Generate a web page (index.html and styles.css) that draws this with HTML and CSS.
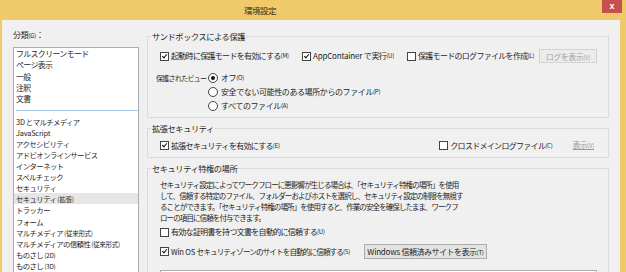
FILE: index.html
```html
<!DOCTYPE html>
<html lang="ja">

<head>
    <meta charset="UTF-8">
    <title>環境設定</title>
    <link rel="stylesheet" href="styles.css">
</head>

<body>
    <div class="window">
        <div class="titlebar">
            <span class="title">環境設定</span>
            <span class="close">x</span>
        </div>

        <div class="client">
            <!-- 左側：分類リスト -->
            <div class="sidebar">
                <div class="side-label">分類<span class="key">(G)</span>：</div>
                <div class="listbox">
                    <div class="item big">フルスクリーンモード</div>
                    <div class="item big">ページ表示</div>
                    <div class="item big">一般</div>
                    <div class="item big">注釈</div>
                    <div class="item big">文書</div>
                    <div class="sep"></div>
                    <div class="item"><span class="lat">3D</span> とマルチメディア</div>
                    <div class="item"><span class="lat">JavaScript</span></div>
                    <div class="item">アクセシビリティ</div>
                    <div class="item">アドビオンラインサービス</div>
                    <div class="item">インターネット</div>
                    <div class="item">スペルチェック</div>
                    <div class="item">セキュリティ</div>
                    <div class="item selected">セキュリティ <span class="small">(拡張)</span></div>
                    <div class="item">トラッカー</div>
                    <div class="item">フォーム</div>
                    <div class="item">マルチメディア <span class="small">(従来形式)</span></div>
                    <div class="item">マルチメディアの信頼性 <span class="small">(従来形式)</span></div>
                    <div class="item">ものさし <span class="small">(2D)</span></div>
                    <div class="item">ものさし <span class="small">(3D)</span></div>
                </div>
            </div>

            <!-- 右側：設定グループ -->
            <div class="main">
                <fieldset class="group">
                    <legend>サンドボックスによる保護</legend>
                    <div class="group-body g1">
                        <div class="row1">
                            <label class="check"><span class="box on"></span>起動時に保護モードを有効にする<span class="key">(M)</span></label>
                            <label class="check"><span class="box on"></span><span class="lat">AppContainer で</span>実行<span class="key">(U)</span></label>
                            <label class="check"><span class="box"></span>保護モードのログファイルを作成<span class="key">(L)</span></label>
                            <span class="btn disabled">ログを表示<span class="key">(V)</span></span>
                        </div>
                        <div class="view-row">
                            <span class="view-label">保護されたビュー</span>
                            <div class="radios">
                                <label class="radio"><span class="dot on"></span>オフ<span class="key">(O)</span></label>
                                <label class="radio"><span class="dot"></span>安全でない可能性のある場所からのファイル<span class="key">(P)</span></label>
                                <label class="radio"><span class="dot"></span>すべてのファイル<span class="key">(A)</span></label>
                            </div>
                        </div>
                    </div>
                </fieldset>

                <fieldset class="group">
                    <legend>拡張セキュリティ</legend>
                    <div class="group-body g2">
                        <label class="check"><span class="box on"></span>拡張セキュリティを有効にする<span class="key">(E)</span></label>
                        <label class="check cross"><span class="box"></span>クロスドメインログファイル<span class="key">(C)</span></label>
                        <span class="link-disabled">表示<span class="key">(V)</span></span>
                    </div>
                </fieldset>

                <fieldset class="group">
                    <legend>セキュリティ特権の場所</legend>
                    <div class="group-body g3">
                        <p class="desc">セキュリティ設定によってワークフローに悪影響が生じる場合は、「セキュリティ特権の場所」を使用<br>して、信頼する特定のファイル、フォルダーおよびホストを選択し、セキュリティ設定の制限を無視す<br>ることができます。「セキュリティ特権の場所」を使用すると、作業の安全を確保したまま、ワークフ<br>ローの項目に信頼を付与できます。</p>
                        <label class="check"><span class="box"></span>有効な証明書を持つ文書を自動的に信頼する<span class="key">(U)</span></label>
                        <div class="row-win">
                            <label class="check"><span class="box on"></span><span class="lat">Win OS </span>セキュリティゾーンのサイトを自動的に信頼する<span class="key">(S)</span></label>
                            <span class="btn"><span class="lat">Windows </span>信頼済みサイトを表示<span class="key">(T)</span></span>
                        </div>
                        <div class="sites"></div>
                    </div>
                </fieldset>
            </div>
        </div>
    </div>
</body>

</html>
```

FILE: styles.css
```css
body {
    margin: 0;
    background-color: #f0c96a;
    font-family: "Noto Sans CJK JP", sans-serif;
    font-size: 8px;
    letter-spacing: -0.7px;
    color: #1e1e1e;
}

.window {
    width: 626px;
    height: 272px;
    overflow: hidden;
    display: flex;
    flex-direction: column;
}

.titlebar {
    height: 20px;
    display: flex;
    flex-shrink: 0;
}

.title {
    margin-left: 244px;
    line-height: 20px;
    font-size: 8.5px;
    letter-spacing: -0.5px;
    color: #3a3320;
}

.close {
    margin-left: auto;
    margin-right: 4px;
    width: 20px;
    height: 13px;
    line-height: 12px;
    text-align: center;
    background-color: #c7504c;
    color: #fff;
    font-family: "Liberation Sans", sans-serif;
    font-size: 9px;
    font-weight: bold;
    letter-spacing: 0;
}

.client {
    flex: 1;
    margin: 0 6px 0 2px;
    background-color: #f0f0f0;
    display: flex;
    overflow: hidden;
}

.key {
    font-size: 6px;
    letter-spacing: -0.2px;
}

.small {
    font-size: 6.5px;
    letter-spacing: -0.3px;
}

/* 英字は詰めすぎない */
.lat {
    letter-spacing: -0.2px;
    white-space: pre;
}

/* 左側 */
.sidebar {
    width: 134px;
    padding: 9px 0 0 11px;
    display: flex;
    flex-direction: column;
}

.side-label {
    line-height: 12px;
    font-size: 8px;
    letter-spacing: -0.3px;
    margin-bottom: 5px;
}

.listbox {
    width: 124px;
    height: 240px;
    background-color: #fff;
    border: 1px solid #abadb3;
    flex-shrink: 0;
}

.item {
    padding-left: 2px;
    height: 11.08px;
    line-height: 11px;
    font-size: 7.4px;
    letter-spacing: -0.6px;
    white-space: nowrap;
}

.item.big {
    height: 11.25px;
    font-size: 7.9px;
}

.item.selected {
    background-color: #e6e6e6;
}

.sep {
    height: 11.6px;
    display: flex;
    align-items: center;
    padding-left: 2px;
}

.sep::before {
    content: "";
    flex: 1;
    height: 1px;
    background-color: #a9cbe9;
}

/* 右側 */
.main {
    width: 462px;
    padding-top: 10px;
}

.group {
    margin: 0 0 4px 0;
    padding: 0;
    border: 1px solid #dadada;
    min-width: 0;
}

.group legend {
    margin-left: 3px;
    padding: 0 1px;
    line-height: 12px;
    font-size: 8.2px;
    letter-spacing: -0.4px;
}

.group-body {
    padding-left: 12px;
}

.check,
.radio {
    display: flex;
    align-items: center;
    white-space: nowrap;
    line-height: 12px;
}

.box {
    width: 7px;
    height: 7px;
    border: 1px solid #444;
    background-color: #fff;
    margin-right: 2px;
    flex-shrink: 0;
    position: relative;
}

.box.on::after {
    content: "";
    position: absolute;
    left: 2px;
    top: 0px;
    width: 2px;
    height: 4px;
    border: solid #111;
    border-width: 0 1.5px 1.5px 0;
    transform: rotate(40deg);
}

.dot {
    width: 8px;
    height: 8px;
    border: 1px solid #444;
    border-radius: 50%;
    background-color: #fff;
    margin-right: 3px;
    flex-shrink: 0;
    display: flex;
    align-items: center;
    justify-content: center;
}

.dot.on::after {
    content: "";
    width: 4px;
    height: 4px;
    border-radius: 50%;
    background-color: #111;
}

.btn {
    height: 14px;
    line-height: 13px;
    box-sizing: border-box;
    border: 1px solid #adadad;
    background-color: #e3e3e3;
    text-align: center;
    white-space: nowrap;
    letter-spacing: -0.5px;
}

.btn.disabled {
    color: #a3a3a3;
    border-color: #d3d3d3;
    background-color: #ececec;
}

/* サンドボックス */
.g1 {
    padding-top: 7px;
    padding-bottom: 4px;
}

.row1 {
    display: grid;
    grid-template-columns: 142px 105px 132px 58px;
    align-items: center;
}

.view-row {
    display: flex;
    margin-top: 8px;
    margin-left: -4px;
}

.view-label {
    width: 52px;
    font-size: 7px;
    letter-spacing: -0.7px;
    line-height: 14px;
    white-space: nowrap;
}

.radio {
    line-height: 14px;
    letter-spacing: -0.4px;
}

/* 拡張セキュリティ */
.g2 {
    display: flex;
    align-items: center;
    padding-top: 5px;
    padding-bottom: 5px;
}

.cross {
    margin-left: auto;
}

.link-disabled {
    margin: 0 14px 0 20px;
    color: #9a9a9a;
    text-decoration: underline;
    line-height: 12px;
}

/* セキュリティ特権の場所 */
.g3 {
    padding-top: 5px;
    padding-right: 11px;
}

.desc {
    margin: 0 0 3px 0;
    line-height: 11px;
    font-size: 7.5px;
    letter-spacing: -0.9px;
    white-space: nowrap;
}

.row-win {
    display: flex;
    align-items: center;
    margin-top: 6px;
}

.row-win .check {
    width: 204px;
    font-size: 7.6px;
    letter-spacing: -0.9px;
}

.row-win .btn {
    width: 123px;
    height: 15px;
    line-height: 14px;
}

.sites {
    margin-top: 11px;
    height: 30px;
    background-color: #fff;
    border: 1px solid #abadb3;
}
```
